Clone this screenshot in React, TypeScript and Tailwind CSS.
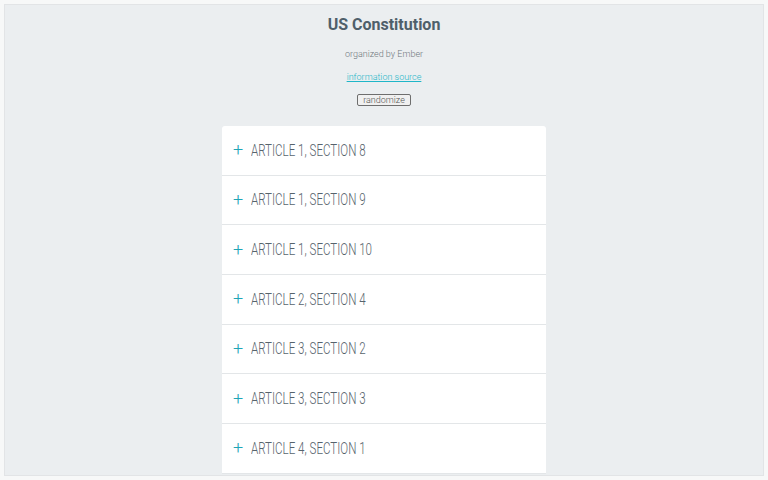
const sections = [
  "ARTICLE 1, SECTION 8",
  "ARTICLE 1, SECTION 9",
  "ARTICLE 1, SECTION 10",
  "ARTICLE 2, SECTION 4",
  "ARTICLE 3, SECTION 2",
  "ARTICLE 3, SECTION 3",
  "ARTICLE 4, SECTION 1",
];

export default function App() {
  return (
    <div className="h-screen overflow-hidden bg-[#f7f8f8] p-[4px] font-['Roboto',sans-serif]">
      <div className="h-[472px] overflow-hidden border border-[#e2e4e6] bg-[#ebeef0]">
        <div className="flex flex-col items-center">
          <h1 className="mt-[9px] text-[16px] font-bold leading-[22px] text-[#4f5f6a]">
            US Constitution
          </h1>
          <p className="mt-[12px] text-[9px] font-light leading-[12px] text-[#6f777d]">
            organized by Ember
          </p>
          <a
            href="#"
            className="mt-[11px] text-[9px] font-light leading-[12px] text-[#1fb6c8] underline"
          >
            information source
          </a>
          <button className="mt-[11px] rounded-[2px] border border-[#6e6e6e] bg-[#f0f0f0] px-[5px] text-[9px] font-light leading-[10px] text-[#555]">
            randomize
          </button>
        </div>
        <div className="mx-auto mt-[20px] w-[324px] rounded-t-[3px] bg-white">
          {sections.map((s) => (
            <div
              key={s}
              className="flex h-[49.7px] items-center border-b border-[#e3e6e8] px-[11px]"
            >
              <span className="mr-[8px] text-[18px] font-light leading-none text-[#1ea5b6]">
                +
              </span>
              <span className="inline-block origin-left scale-x-[0.68] whitespace-nowrap text-[17px] font-light text-[#56636c]">
                {s}
              </span>
            </div>
          ))}
        </div>
      </div>
    </div>
  );
}
